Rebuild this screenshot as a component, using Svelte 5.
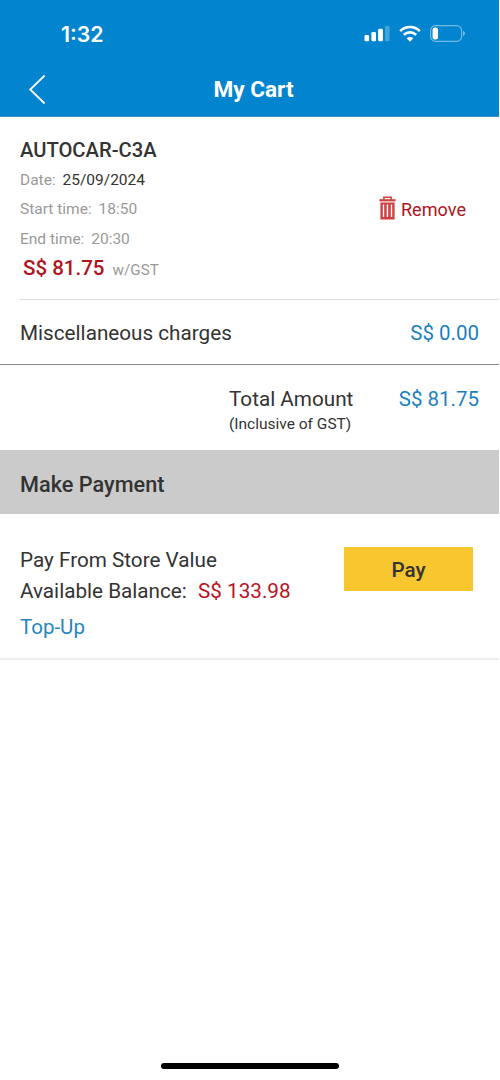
<script lang="ts">
  let items = [
    {
      id: 1,
      name: 'AUTOCAR-C3A',
      date: '25/09/2024',
      start: '18:50',
      end: '20:30',
      price: 81.75
    }
  ];
  let misc = 0;
  let balance = 133.98;

  $: total = items.reduce((sum, item) => sum + item.price, misc);

  function money(value: number) {
    return 'S$ ' + value.toFixed(2);
  }

  function removeItem(id: number) {
    items = items.filter((item) => item.id !== id);
  }

  function pay() {
    if (balance < total) return;
    balance -= total;
    items = [];
  }
</script>

<div class="screen">
  <header>
    <div class="status">
      <span class="clock">1:32</span>
      <div class="indicators">
        <svg class="signal" width="26" height="17" viewBox="0 0 26 17">
          <rect x="0.5" y="10" width="4.6" height="6.3" rx="1.3" />
          <rect x="7.4" y="7" width="4.6" height="9.3" rx="1.3" />
          <rect x="14.1" y="3.8" width="4.8" height="12.5" rx="1.3" />
          <rect x="21" y="0.8" width="4.6" height="15.5" rx="1.3" opacity="0.25" />
        </svg>
        <svg class="wifi" width="22" height="17" viewBox="0 0 22 17">
          <path d="M1.2 6.1 A13.9 13.9 0 0 1 20.8 6.1" />
          <path d="M4.8 9.9 A8.8 8.8 0 0 1 17.2 9.9" />
          <path class="dot" d="M11 16.7 L7.6 13.3 A4.8 4.8 0 0 1 14.4 13.3 Z" />
        </svg>
        <svg class="battery" width="35" height="17" viewBox="0 0 35 17">
          <rect class="shell" x="0.6" y="0.6" width="31" height="15.8" rx="5" />
          <rect x="2.6" y="2.6" width="5.4" height="11.8" rx="2.2" />
          <path d="M33 5.8 Q35 6.6 35 8.5 Q35 10.4 33 11.2 Z" opacity="0.45" />
        </svg>
      </div>
    </div>
    <div class="navbar">
      <button class="back" aria-label="Back">
        <svg width="18" height="30" viewBox="0 0 18 30">
          <path d="M16.6 0.5 L2.2 14.5 L16.6 28.5" />
        </svg>
      </button>
      <h1>My Cart</h1>
    </div>
  </header>

  {#each items as item (item.id)}
    <section class="item">
      <div class="details">
        <h2>{item.name}</h2>
        <p>Date: <span class="value date">{item.date}</span></p>
        <p>Start time: <span class="value">{item.start}</span></p>
        <p>End time: <span class="value">{item.end}</span></p>
        <div class="price">
          <strong>{money(item.price)}</strong>
          <span>w/GST</span>
        </div>
      </div>
      <button class="remove" on:click={() => removeItem(item.id)}>
        <svg width="17" height="24" viewBox="0 0 17 24">
          <path d="M4.9 3.8 V1.2 H12.1 V3.8" fill="none" stroke="currentColor" stroke-width="1.6" />
          <rect x="0.4" y="3.2" width="16.2" height="2.2" />
          <path
            fill-rule="evenodd"
            d="M1.4 6.4 H15.6 V23.5 H1.4 Z M3.8 8.4 V20.9 H5.2 V8.4 Z M7.7 8.4 V20.9 H9.2 V8.4 Z M11.8 8.4 V20.9 H13.2 V8.4 Z"
          />
        </svg>
        <span>Remove</span>
      </button>
    </section>
  {/each}

  <section class="misc">
    <span>Miscellaneous charges</span>
    <span class="amount">{money(misc)}</span>
  </section>

  <section class="total">
    <div class="label">
      <span>Total Amount</span>
      <small>(Inclusive of GST)</small>
    </div>
    <span class="amount">{money(total)}</span>
  </section>

  <h3>Make Payment</h3>

  <section class="payment">
    <div class="store">
      <p>Pay From Store Value</p>
      <p>Available Balance: <span class="balance">{money(balance)}</span></p>
      <button class="topup">Top-Up</button>
    </div>
    <button class="pay" on:click={pay}>Pay</button>
  </section>

  <div class="home"></div>
</div>

<style>
  :global(body) {
    background: #fff;
  }

  .screen {
    width: 499px;
    height: 1080px;
    box-sizing: border-box;
    display: flex;
    flex-direction: column;
    background: #fff;
    color: #333;
    font-family: Roboto, 'Liberation Sans', sans-serif;
    font-size: 20.7px;
  }

  h1,
  h2,
  h3,
  p {
    margin: 0;
    font-weight: 500;
  }

  p {
    font-weight: 400;
  }

  button {
    padding: 0;
    border: none;
    background: none;
    color: inherit;
    font: inherit;
    cursor: pointer;
  }

  svg {
    display: block;
  }

  header {
    height: 117px;
    box-sizing: border-box;
    border-bottom: 1px solid #3b96cc;
    background: #0284ce;
    color: #fff;
  }

  .status {
    height: 67px;
    padding: 0 34px 0 61px;
    display: flex;
    align-items: center;
    justify-content: space-between;
  }

  .clock {
    font-family: Inter, sans-serif;
    font-size: 21.3px;
    font-weight: 600;
    line-height: 26px;
  }

  .indicators {
    display: flex;
    align-items: center;
    gap: 9px;
    fill: #fff;
  }

  .wifi path {
    fill: none;
    stroke: #fff;
    stroke-width: 2.6;
  }

  .wifi .dot {
    fill: #fff;
    stroke: none;
  }

  .battery .shell {
    fill: none;
    stroke: #fff;
    stroke-width: 1.1;
    opacity: 0.45;
  }

  .navbar {
    height: 45px;
    display: grid;
    grid-template-columns: 60px 1fr 52px;
    align-items: center;
  }

  .back {
    padding-left: 28px;
  }

  .back path {
    fill: none;
    stroke: #fff;
    stroke-width: 1.8;
  }

  h1 {
    text-align: center;
    font-size: 22.6px;
    font-weight: 700;
  }

  .item {
    height: 182px;
    margin-left: 20px;
    padding-right: 33px;
    border-bottom: 1px solid #ddd;
    display: flex;
    align-items: center;
    justify-content: space-between;
  }

  .details {
    align-self: flex-start;
    padding-top: 18px;
  }

  h2 {
    font-size: 20.2px;
    line-height: 31px;
  }

  .details p {
    color: #999;
    font-size: 15.5px;
    line-height: 29.4px;
  }

  .value {
    margin-left: 3px;
  }

  .details .date {
    color: #333;
  }

  .price {
    padding-left: 3px;
    line-height: 29px;
  }

  .price strong {
    color: #b0131b;
    font-size: 20.5px;
    font-weight: 500;
  }

  .price span {
    margin-left: 3px;
    color: #999;
    font-size: 15.2px;
  }

  .remove {
    display: flex;
    align-items: center;
    gap: 5px;
    color: #b0131b;
    font-size: 18.1px;
  }

  .remove span {
    padding-top: 2px;
  }

  .remove svg {
    color: #cf4040;
    fill: #cf4040;
  }

  .misc {
    height: 62px;
    padding: 2px 20px 0;
    border-bottom: 1px solid #888;
    display: flex;
    align-items: center;
    justify-content: space-between;
    line-height: 26px;
  }

  .amount {
    color: #1c80bf;
    font-size: 20.5px;
  }

  .total {
    height: 85px;
    box-sizing: border-box;
    padding: 20px 20px 0 229px;
    display: flex;
    justify-content: space-between;
    line-height: 28px;
  }

  .label {
    display: flex;
    flex-direction: column;
  }

  .label small {
    font-size: 15.5px;
    line-height: 23px;
  }

  h3 {
    height: 64px;
    padding: 3px 20px 0;
    box-sizing: border-box;
    background: #cbcbcb;
    font-size: 21.7px;
    line-height: 64px;
  }

  .payment {
    height: 113px;
    padding: 31px 26px 0 20px;
    border-bottom: 2px solid #eee;
    display: flex;
    align-items: flex-start;
    justify-content: space-between;
  }

  .store p {
    line-height: 31px;
  }

  .balance {
    margin-left: 6px;
    color: #b9141f;
  }

  .topup {
    display: block;
    color: #1f86c2;
    font-size: 20.5px;
    line-height: 40px;
  }

  .pay {
    width: 129px;
    height: 44px;
    margin-top: 2px;
    padding-top: 1px;
    background: #f8c72f;
    font-weight: 500;
  }

  .home {
    width: 178px;
    height: 6px;
    margin: auto auto 11px;
    border-radius: 3px;
    background: #000;
  }
</style>
